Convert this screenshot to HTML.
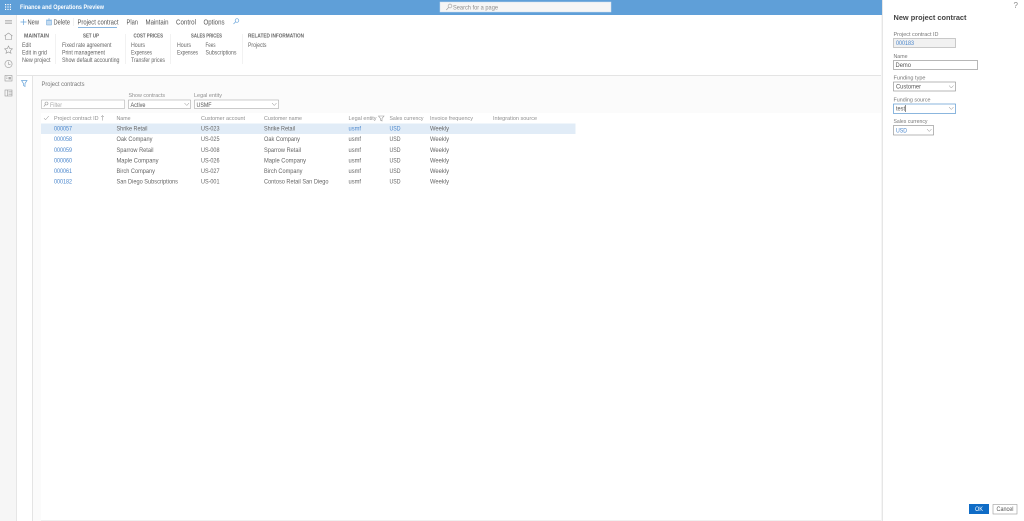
<!DOCTYPE html>
<html><head><meta charset="utf-8"><title>New project contract</title>
<style>
html,body{margin:0;padding:0;background:#fff;width:1024px;height:521px;overflow:hidden}
svg{display:block;font-family:"Liberation Sans",sans-serif}
text{font-size:6.2px;fill:#555}
.g{fill:#8f8f8f}.b{fill:#4a86cc}.h{font-weight:bold;fill:#666;font-size:5.5px}
.m{font-size:7px;fill:#555}.r{font-size:6.2px;fill:#666}
.ic{fill:none;stroke:#999;stroke-width:.6}
.bl{fill:none;stroke:#6aa5da;stroke-width:.7}
.ch{fill:none;stroke:#888;stroke-width:.5}
</style></head><body>
<svg width="1024" height="521" viewBox="0 0 1024 521" xmlns="http://www.w3.org/2000/svg">
<rect width="1024" height="521" fill="#fff"/>
<!-- content backgrounds -->
<rect x="0" y="15" width="16" height="506" fill="#f6f6f6"/>
<rect x="16" y="15" width="1" height="506" fill="#e6e6e6"/>
<rect x="32" y="76" width="1" height="445" fill="#e4e4e4"/>
<rect x="33" y="76" width="850" height="445" fill="#fbfbfb"/>
<rect x="17" y="75" width="866" height="1" fill="#e4e4e4"/>
<rect x="41" y="113" width="842" height="407" fill="#fff"/>
<rect x="41" y="520" width="842" height="1" fill="#f0f0f0"/>
<!-- header -->
<rect width="883" height="15" fill="#5f9fd8"/>
<g fill="#fff"><rect x="5" y="4" width="1.2" height="1.2"/><rect x="7.4" y="4" width="1.2" height="1.2"/><rect x="9.8" y="4" width="1.2" height="1.2"/><rect x="5" y="6.4" width="1.2" height="1.2"/><rect x="7.4" y="6.4" width="1.2" height="1.2"/><rect x="9.8" y="6.4" width="1.2" height="1.2"/><rect x="5" y="8.8" width="1.2" height="1.2"/><rect x="7.4" y="8.8" width="1.2" height="1.2"/><rect x="9.8" y="8.8" width="1.2" height="1.2"/></g>
<text x="20" y="9.2" style="font-size:6.2px;fill:#fff;font-weight:bold" textLength="84" lengthAdjust="spacingAndGlyphs">Finance and Operations Preview</text>
<rect x="440" y="2" width="171" height="10" fill="#f6f6f6" stroke="#cfe0f0" stroke-width=".5"/>
<circle cx="450" cy="6" r="1.9" class="ic"/><path d="M448.6 7.4L446.3 10" class="ic"/>
<text x="453" y="9.5" class="g" style="font-size:6.6px" textLength="45" lengthAdjust="spacingAndGlyphs">Search for a page</text>
<!-- nav icons -->
<path d="M5 20.5h7M5 22h7M5 23.5h7" stroke="#888" stroke-width=".6" fill="none"/>
<path d="M4.5 36L8.5 33L12.5 36M5.5 35.5V39.5H11.5V35.5" class="ic"/>
<path d="M8.5 46L9.7 48.6L12.4 48.9L10.4 50.7L11 53.3L8.5 52L6 53.3L6.6 50.7L4.6 48.9L7.3 48.6Z" class="ic"/>
<circle cx="8.5" cy="64" r="3.6" class="ic"/><path d="M8.5 61.8V64.3H10.5" class="ic"/>
<rect x="5" y="75.5" width="7" height="5.5" class="ic"/><rect x="8.5" y="77" width="2.4" height="2.4" fill="#aaa"/><path d="M6 77h1.5M6 78.5h1.5" class="ic"/>
<rect x="5" y="90" width="7" height="6" class="ic"/><path d="M7.5 90V96M8.5 91.5H12M8.5 93H12M8.5 94.5H12" class="ic"/>
<!-- action bar -->
<path d="M20.5 22H26.5M23.5 19V25" stroke="#6aa5da" stroke-width=".7" fill="none"/>
<text x="27.5" y="24.5" class="m" textLength="11.5" lengthAdjust="spacingAndGlyphs">New</text>
<path d="M46.5 20.5H51.5V25H46.5Z" fill="#c4dbf0" stroke="#6aa5da" stroke-width=".5"/><path d="M46 20H52M48 19H50" stroke="#6aa5da" stroke-width=".5"/>
<text x="53.5" y="24.5" class="m" textLength="16.5" lengthAdjust="spacingAndGlyphs">Delete</text>
<rect x="73.5" y="18" width=".5" height="8" fill="#e2e2e2"/>
<text x="77.5" y="24.5" class="m" textLength="41" lengthAdjust="spacingAndGlyphs">Project contract</text>
<rect x="78" y="27" width="39" height=".8" fill="#6aa5da"/>
<text x="126.5" y="24.5" class="m" textLength="11.5" lengthAdjust="spacingAndGlyphs">Plan</text>
<text x="145.5" y="24.5" class="m" textLength="23" lengthAdjust="spacingAndGlyphs">Maintain</text>
<text x="176" y="24.5" class="m" textLength="20" lengthAdjust="spacingAndGlyphs">Control</text>
<text x="203.5" y="24.5" class="m" textLength="21" lengthAdjust="spacingAndGlyphs">Options</text>
<circle cx="237" cy="20.5" r="1.8" class="bl"/><path d="M235.7 21.8L233.5 24" class="bl"/>
<!-- ribbon groups -->
<text x="24" y="37.3" class="h" textLength="25" lengthAdjust="spacingAndGlyphs">MAINTAIN</text>
<text x="22" y="47" class="r" textLength="9" lengthAdjust="spacingAndGlyphs">Edit</text>
<text x="22" y="54.5" class="r" textLength="25" lengthAdjust="spacingAndGlyphs">Edit in grid</text>
<text x="22" y="62" class="r" textLength="28.5" lengthAdjust="spacingAndGlyphs">New project</text>
<rect x="55.5" y="34" width=".5" height="30" fill="#e6e6e6"/>
<text x="83" y="37.3" class="h" textLength="16" lengthAdjust="spacingAndGlyphs">SET UP</text>
<text x="62" y="47" class="r" textLength="49.5" lengthAdjust="spacingAndGlyphs">Fixed rate agreement</text>
<text x="62" y="54.5" class="r" textLength="43" lengthAdjust="spacingAndGlyphs">Print management</text>
<text x="62" y="62" class="r" textLength="57.5" lengthAdjust="spacingAndGlyphs">Show default accounting</text>
<rect x="125" y="34" width=".5" height="30" fill="#e6e6e6"/>
<text x="133.5" y="37.3" class="h" textLength="29.5" lengthAdjust="spacingAndGlyphs">COST PRICES</text>
<text x="131" y="47" class="r" textLength="14" lengthAdjust="spacingAndGlyphs">Hours</text>
<text x="131" y="54.5" class="r" textLength="21" lengthAdjust="spacingAndGlyphs">Expenses</text>
<text x="131" y="62" class="r" textLength="34" lengthAdjust="spacingAndGlyphs">Transfer prices</text>
<rect x="170" y="34" width=".5" height="30" fill="#e6e6e6"/>
<text x="191" y="37.3" class="h" textLength="31" lengthAdjust="spacingAndGlyphs">SALES PRICES</text>
<text x="177" y="47" class="r" textLength="14" lengthAdjust="spacingAndGlyphs">Hours</text>
<text x="177" y="54.5" class="r" textLength="21" lengthAdjust="spacingAndGlyphs">Expenses</text>
<text x="205.5" y="47" class="r" textLength="10" lengthAdjust="spacingAndGlyphs">Fees</text>
<text x="205.5" y="54.5" class="r" textLength="31" lengthAdjust="spacingAndGlyphs">Subscriptions</text>
<rect x="242" y="34" width=".5" height="30" fill="#e6e6e6"/>
<text x="248" y="37.3" class="h" textLength="56" lengthAdjust="spacingAndGlyphs">RELATED INFORMATION</text>
<text x="248" y="47" class="r" textLength="18.5" lengthAdjust="spacingAndGlyphs">Projects</text>
<!-- filter pane -->
<path d="M21.5 80.5H27L25 83.5V86.5L23.5 85.5V83.5Z" class="bl"/>
<!-- title + filters -->
<text x="41.5" y="86" style="font-size:6.8px;fill:#777" textLength="43" lengthAdjust="spacingAndGlyphs">Project contracts</text>
<rect x="41.5" y="100" width="83" height="8.5" fill="#fff" stroke="#a5a5a5" stroke-width=".5"/>
<circle cx="46.5" cy="103.5" r="1.5" class="ic"/><path d="M45.4 104.6L43.8 106.5" class="ic"/>
<text x="50" y="107" class="g" style="font-size:6px;fill:#aaa" textLength="12" lengthAdjust="spacingAndGlyphs">Filter</text>
<text x="128.5" y="97" class="g" style="font-size:5.8px" textLength="36.5" lengthAdjust="spacingAndGlyphs">Show contracts</text>
<rect x="128.5" y="100" width="62" height="8.5" fill="#fff" stroke="#999" stroke-width=".5"/>
<text x="130.5" y="107" style="font-size:6.6px" textLength="15" lengthAdjust="spacingAndGlyphs">Active</text>
<path d="M184.5 103L186.8 105.5L189 103" class="ch"/>
<text x="194" y="97" class="g" style="font-size:5.8px" textLength="28" lengthAdjust="spacingAndGlyphs">Legal entity</text>
<rect x="194.5" y="100" width="84" height="8.5" fill="#fff" stroke="#999" stroke-width=".5"/>
<text x="196.5" y="107" style="font-size:6.6px" textLength="15" lengthAdjust="spacingAndGlyphs">USMF</text>
<path d="M272 103L274.3 105.5L276.5 103" class="ch"/>
<!-- grid header -->
<path d="M44 118L45.5 119.8L48.8 116" fill="none" stroke="#888" stroke-width=".5"/>
<g>
<text x="54" y="120" class="g" style="font-size:5.9px" textLength="44.5" lengthAdjust="spacingAndGlyphs">Project contract ID</text>
<path d="M102.5 115.5V120.5M101 117L102.5 115.5L104 117" class="ch"/>
<text x="116.5" y="120" class="g" style="font-size:5.9px" textLength="14" lengthAdjust="spacingAndGlyphs">Name</text>
<text x="201" y="120" class="g" style="font-size:5.9px" textLength="44" lengthAdjust="spacingAndGlyphs">Customer account</text>
<text x="264" y="120" class="g" style="font-size:5.9px" textLength="38" lengthAdjust="spacingAndGlyphs">Customer name</text>
<text x="348.5" y="120" class="g" style="font-size:5.9px" textLength="28" lengthAdjust="spacingAndGlyphs">Legal entity</text>
<path d="M378.5 116H384L382 118.5V121L380.5 120.2V118.5Z" class="ic"/>
<text x="389.5" y="120" class="g" style="font-size:5.9px" textLength="34" lengthAdjust="spacingAndGlyphs">Sales currency</text>
<text x="430" y="120" class="g" style="font-size:5.9px" textLength="43" lengthAdjust="spacingAndGlyphs">Invoice frequency</text>
<text x="493" y="120" class="g" style="font-size:5.9px" textLength="44" lengthAdjust="spacingAndGlyphs">Integration source</text>
</g>
<rect x="41" y="123.5" width="534.5" height="10.5" fill="#e1ecf7"/>
<!-- rows -->
<g>
<text x="54" y="130.7" class="b" textLength="18" lengthAdjust="spacingAndGlyphs">000057</text>
<text x="116.5" y="130.7" class="r" textLength="31" lengthAdjust="spacingAndGlyphs">Shrike Retail</text>
<text x="201" y="130.7" class="r" textLength="18.5" lengthAdjust="spacingAndGlyphs">US-023</text>
<text x="264" y="130.7" class="r" textLength="31" lengthAdjust="spacingAndGlyphs">Shrike Retail</text>
<text x="348.5" y="130.7" class="b" textLength="12.5" lengthAdjust="spacingAndGlyphs">usmf</text>
<text x="389.5" y="130.7" class="b" textLength="11" lengthAdjust="spacingAndGlyphs">USD</text>
<text x="430" y="130.7" class="r" textLength="19" lengthAdjust="spacingAndGlyphs">Weekly</text>

<text x="54" y="141.2" class="b" textLength="18" lengthAdjust="spacingAndGlyphs">000058</text>
<text x="116.5" y="141.2" class="r" textLength="36" lengthAdjust="spacingAndGlyphs">Oak Company</text>
<text x="201" y="141.2" class="r" textLength="18.5" lengthAdjust="spacingAndGlyphs">US-025</text>
<text x="264" y="141.2" class="r" textLength="36" lengthAdjust="spacingAndGlyphs">Oak Company</text>
<text x="348.5" y="141.2" class="r" textLength="12.5" lengthAdjust="spacingAndGlyphs">usmf</text>
<text x="389.5" y="141.2" class="r" textLength="11" lengthAdjust="spacingAndGlyphs">USD</text>
<text x="430" y="141.2" class="r" textLength="19" lengthAdjust="spacingAndGlyphs">Weekly</text>

<text x="54" y="151.8" class="b" textLength="18" lengthAdjust="spacingAndGlyphs">000059</text>
<text x="116.5" y="151.8" class="r" textLength="37" lengthAdjust="spacingAndGlyphs">Sparrow Retail</text>
<text x="201" y="151.8" class="r" textLength="18.5" lengthAdjust="spacingAndGlyphs">US-008</text>
<text x="264" y="151.8" class="r" textLength="37" lengthAdjust="spacingAndGlyphs">Sparrow Retail</text>
<text x="348.5" y="151.8" class="r" textLength="12.5" lengthAdjust="spacingAndGlyphs">usmf</text>
<text x="389.5" y="151.8" class="r" textLength="11" lengthAdjust="spacingAndGlyphs">USD</text>
<text x="430" y="151.8" class="r" textLength="19" lengthAdjust="spacingAndGlyphs">Weekly</text>

<text x="54" y="162.5" class="b" textLength="18" lengthAdjust="spacingAndGlyphs">000060</text>
<text x="116.5" y="162.5" class="r" textLength="42" lengthAdjust="spacingAndGlyphs">Maple Company</text>
<text x="201" y="162.5" class="r" textLength="18.5" lengthAdjust="spacingAndGlyphs">US-026</text>
<text x="264" y="162.5" class="r" textLength="42" lengthAdjust="spacingAndGlyphs">Maple Company</text>
<text x="348.5" y="162.5" class="r" textLength="12.5" lengthAdjust="spacingAndGlyphs">usmf</text>
<text x="389.5" y="162.5" class="r" textLength="11" lengthAdjust="spacingAndGlyphs">USD</text>
<text x="430" y="162.5" class="r" textLength="19" lengthAdjust="spacingAndGlyphs">Weekly</text>

<text x="54" y="173.2" class="b" textLength="18" lengthAdjust="spacingAndGlyphs">000061</text>
<text x="116.5" y="173.2" class="r" textLength="38.5" lengthAdjust="spacingAndGlyphs">Birch Company</text>
<text x="201" y="173.2" class="r" textLength="18.5" lengthAdjust="spacingAndGlyphs">US-027</text>
<text x="264" y="173.2" class="r" textLength="38.5" lengthAdjust="spacingAndGlyphs">Birch Company</text>
<text x="348.5" y="173.2" class="r" textLength="12.5" lengthAdjust="spacingAndGlyphs">usmf</text>
<text x="389.5" y="173.2" class="r" textLength="11" lengthAdjust="spacingAndGlyphs">USD</text>
<text x="430" y="173.2" class="r" textLength="19" lengthAdjust="spacingAndGlyphs">Weekly</text>

<text x="54" y="183.6" class="b" textLength="18" lengthAdjust="spacingAndGlyphs">000182</text>
<text x="116.5" y="183.6" class="r" textLength="61.5" lengthAdjust="spacingAndGlyphs">San Diego Subscriptions</text>
<text x="201" y="183.6" class="r" textLength="18.5" lengthAdjust="spacingAndGlyphs">US-001</text>
<text x="264" y="183.6" class="r" textLength="64.5" lengthAdjust="spacingAndGlyphs">Contoso Retail San Diego</text>
<text x="348.5" y="183.6" class="r" textLength="12.5" lengthAdjust="spacingAndGlyphs">usmf</text>
<text x="389.5" y="183.6" class="r" textLength="11" lengthAdjust="spacingAndGlyphs">USD</text>
<text x="430" y="183.6" class="r" textLength="19" lengthAdjust="spacingAndGlyphs">Weekly</text>
</g>
<!-- right panel -->
<rect x="881" y="15" width="1" height="506" fill="#f5f5f5"/>
<rect x="882" y="0" width="1" height="521" fill="#e6e6e6"/>
<rect x="883" y="0" width="141" height="521" fill="#fff"/>
<text x="1013.5" y="8" style="font-size:8px;fill:#888">?</text>
<text x="893.5" y="20" style="font-size:7.6px;fill:#444;font-weight:bold" textLength="73" lengthAdjust="spacingAndGlyphs">New project contract</text>
<text x="893.5" y="36" style="font-size:5.8px;fill:#777" textLength="45" lengthAdjust="spacingAndGlyphs">Project contract ID</text>
<rect x="893.5" y="38.5" width="62" height="9" fill="#f1f1f1" stroke="#999" stroke-width=".5"/>
<text x="896" y="45.2" class="b" style="font-size:6.2px" textLength="18" lengthAdjust="spacingAndGlyphs">000183</text>
<text x="893.5" y="58" style="font-size:5.8px;fill:#777" textLength="14" lengthAdjust="spacingAndGlyphs">Name</text>
<rect x="893.5" y="60.5" width="84" height="9" fill="#fff" stroke="#888" stroke-width=".6"/>
<text x="895.5" y="67.2" style="font-size:6.8px" textLength="15.5" lengthAdjust="spacingAndGlyphs">Demo</text>
<text x="893.5" y="79.5" style="font-size:5.8px;fill:#777" textLength="32" lengthAdjust="spacingAndGlyphs">Funding type</text>
<rect x="893.5" y="82" width="62" height="9" fill="#fff" stroke="#888" stroke-width=".6"/>
<text x="896" y="88.7" style="font-size:6.8px" textLength="25" lengthAdjust="spacingAndGlyphs">Customer</text>
<path d="M949 85.5L951.3 88L953.5 85.5" class="ch"/>
<text x="893.5" y="101.5" style="font-size:5.8px;fill:#777" textLength="37" lengthAdjust="spacingAndGlyphs">Funding source</text>
<rect x="893.5" y="104" width="62" height="9.5" fill="#fff" stroke="#5a98d0" stroke-width=".7"/>
<text x="896" y="110.7" style="font-size:6.8px" textLength="9" lengthAdjust="spacingAndGlyphs">test</text>
<rect x="905" y="105" width=".6" height="7" fill="#444"/>
<path d="M949 107L951.3 109.5L953.5 107" class="ch"/>
<text x="893.5" y="123" style="font-size:5.8px;fill:#777" textLength="34" lengthAdjust="spacingAndGlyphs">Sales currency</text>
<rect x="893.5" y="125.5" width="40" height="9.5" fill="#fff" stroke="#888" stroke-width=".6"/>
<text x="896" y="132.5" class="b" style="font-size:6.6px" textLength="11" lengthAdjust="spacingAndGlyphs">USD</text>
<path d="M927 129L929.3 131.5L931.5 129" class="ch"/>
<!-- buttons -->
<rect x="969" y="504" width="20" height="10" fill="#0f6cc6"/>
<text x="975" y="511.2" style="font-size:6.2px;fill:#fff" textLength="8" lengthAdjust="spacingAndGlyphs">OK</text>
<rect x="993" y="504.5" width="24" height="9.5" fill="#fff" stroke="#999" stroke-width=".6"/>
<text x="996.5" y="511.2" style="font-size:6.2px;fill:#555" textLength="17" lengthAdjust="spacingAndGlyphs">Cancel</text>
</svg>
</body></html>
